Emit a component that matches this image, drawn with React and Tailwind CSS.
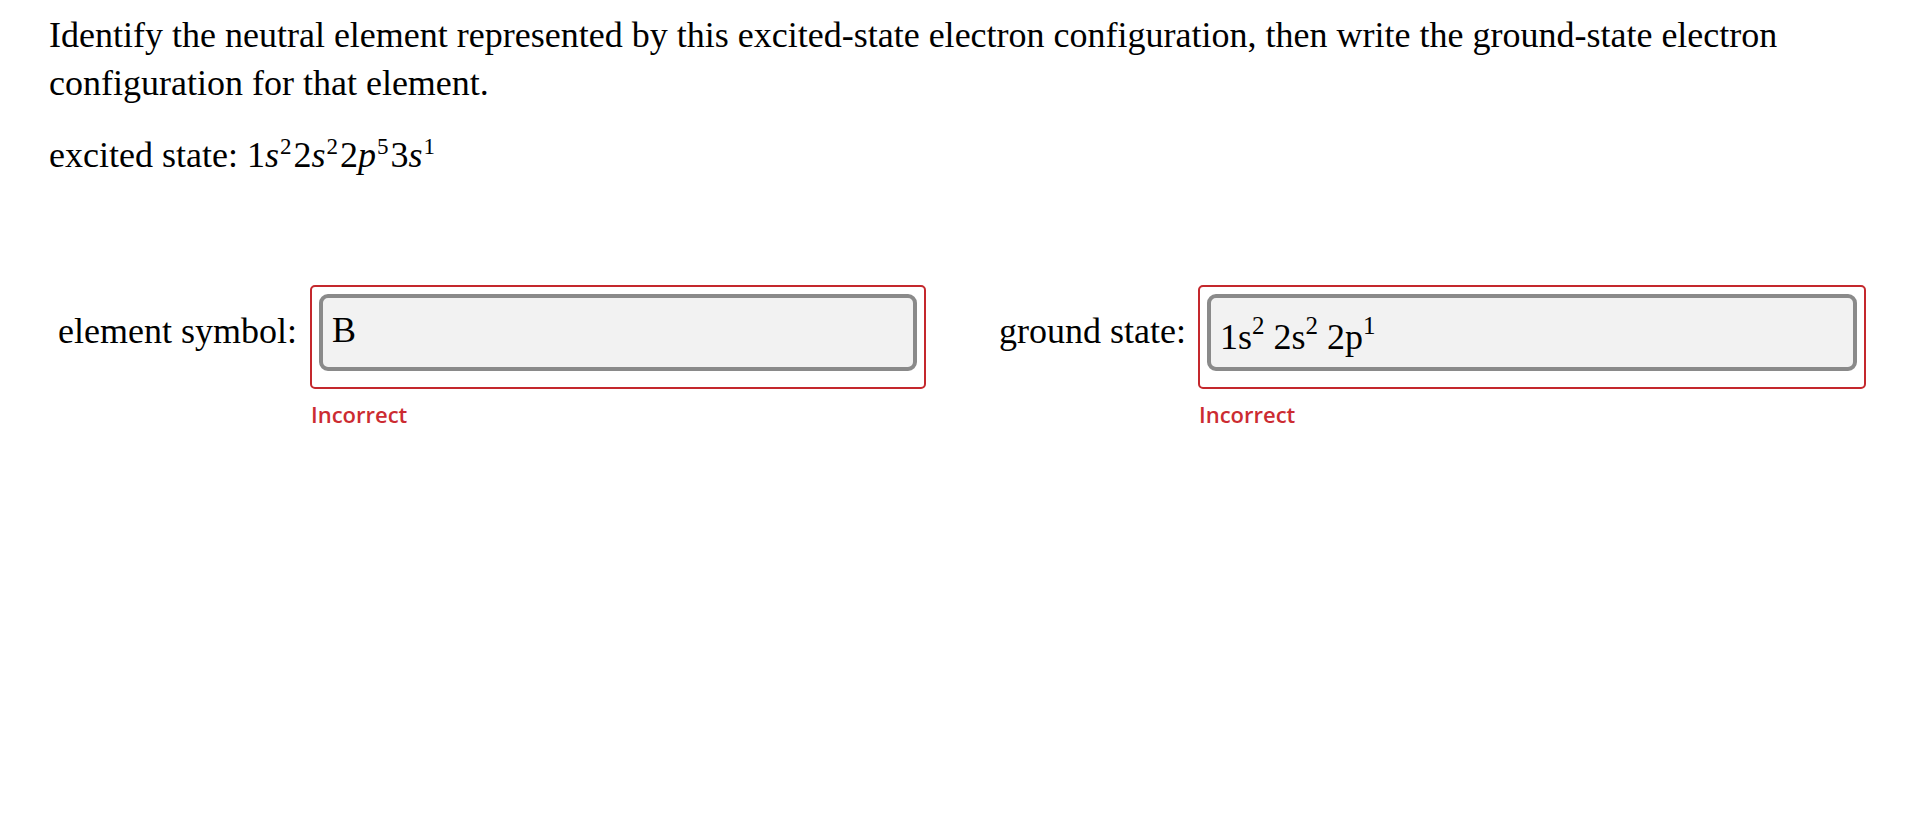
import React from 'react';

const Sup = ({ children }) => (
  <span className="text-[23px] leading-none align-[13px] ml-[1px] mr-[2px]">{children}</span>
);

const GroundSup = ({ children }) => (
  <span className="text-[25px] leading-none align-[15px]">{children}</span>
);

const AnswerBox = ({ width, children, textPad }) => (
  <div className="flex flex-col gap-[11px]">
    <div className={`${width} border-2 border-[#c4282d] rounded-[5px] pt-[7px] px-[7px] pb-[16px]`}>
      <div className={`h-[77px] border-4 border-[#8a8a8a] rounded-[9px] bg-[#f2f2f2] pl-[9px] ${textPad} text-[36px] leading-[48px] text-black whitespace-nowrap`}>
        {children}
      </div>
    </div>
    <p className="pl-[1px] text-[22px] leading-[28px] font-semibold text-[#cc2b31] font-['Open_Sans',sans-serif]">
      Incorrect
    </p>
  </div>
);

const Field = ({ label, gap, children }) => (
  <div className={`flex items-start ${gap}`}>
    <span className="pt-[22px] text-[36px] leading-[48px] whitespace-nowrap">{label}</span>
    {children}
  </div>
);

export default function App() {
  return (
    <div className="min-h-screen bg-white pl-[49px] pr-[40px] pt-[11px] font-['Liberation_Serif','Times_New_Roman',serif] text-black">
      <div className="flex flex-col gap-[24px] text-[36px] leading-[48px]">
        <p>
          Identify the neutral element represented by this excited-state electron configuration, then write the ground-state electron configuration for that element.
        </p>
        <p>
          excited state: 1<i>s</i>
          <Sup>2</Sup>2<i>s</i>
          <Sup>2</Sup>2<i>p</i>
          <Sup>5</Sup>3<i>s</i>
          <Sup>1</Sup>
        </p>
      </div>

      <div className="mt-[106px] pl-[9px] flex items-start gap-[73px]">
        <Field label="element symbol:" gap="gap-[13px]">
          <AnswerBox width="w-[616px]" textPad="pt-[8px]">B</AnswerBox>
        </Field>
        <Field label="ground state:" gap="gap-[12px]">
          <AnswerBox width="w-[668px]" textPad="pt-[15px]">
            1s<GroundSup>2</GroundSup> 2s<GroundSup>2</GroundSup> 2p<GroundSup>1</GroundSup>
          </AnswerBox>
        </Field>
      </div>
    </div>
  );
}
